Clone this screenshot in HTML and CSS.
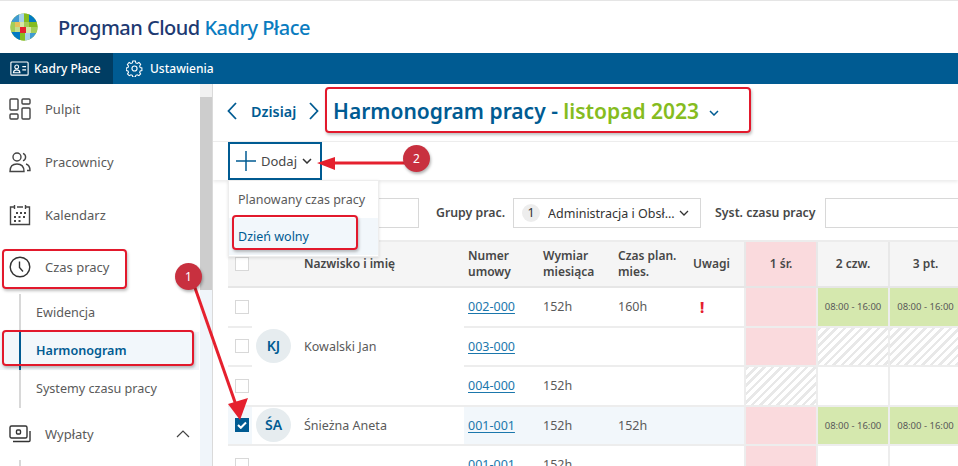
FILE: index.html
```html
<!DOCTYPE html>
<html lang="en">
<head>
    <meta charset="UTF-8">
    <meta name="viewport" content="width=device-width, initial-scale=1.0">
    <title>Harmonogram pracy</title>
    <link rel="stylesheet" href="styles.css">
</head>
<body>
    <header class="top-bar">
        <svg class="logo" viewBox="0 0 28 28" width="28" height="28">
            <defs><clipPath id="logoClip"><circle cx="14" cy="14" r="13.5"/></clipPath></defs>
            <g clip-path="url(#logoClip)">
                <rect width="28" height="28" fill="#85bc20"/>
                <rect x="0" y="0" width="9" height="9" fill="#409bd2"/>
                <rect x="9" y="0" width="5" height="9" fill="#a6d1ea"/>
                <rect x="14" y="0" width="5" height="9" fill="#85bc20"/>
                <rect x="19" y="0" width="9" height="9" fill="#007ac3"/>
                <rect x="0" y="9" width="5" height="10" fill="#a4cd58"/>
                <rect x="5" y="9" width="5" height="5" fill="#e8c15a"/>
                <rect x="10" y="9" width="4" height="5" fill="#d7e8a8"/>
                <rect x="14" y="9" width="5" height="5" fill="#a4cd58"/>
                <rect x="19" y="9" width="9" height="5" fill="#85bc20"/>
                <rect x="5" y="14" width="5" height="5" fill="#c2dd8c"/>
                <rect x="10" y="14" width="6" height="6" fill="#e5202e"/>
                <rect x="16" y="14" width="5" height="6" fill="#d7e8a8"/>
                <rect x="21" y="14" width="7" height="6" fill="#a4cd58"/>
                <rect x="0" y="19" width="10" height="9" fill="#007ac3"/>
                <rect x="10" y="20" width="5" height="8" fill="#85bc20"/>
                <rect x="15" y="20" width="5" height="8" fill="#a6d1ea"/>
                <rect x="20" y="20" width="8" height="8" fill="#409bd2"/>
            </g>
        </svg>
        <span class="brand">Progman Cloud <span class="brand-light">Kadry Płace</span></span>
    </header>

    <nav class="main-nav">
        <a class="nav-tab active">
            <svg viewBox="0 0 20 16" width="19" height="15" fill="none" stroke="#fff" stroke-width="1.2">
                <rect x="0.8" y="1" width="18.4" height="14" rx="1"/>
                <circle cx="7" cy="6.3" r="2"/>
                <path d="M3.5 12.5c.3-2.2 1.6-3 3.5-3s3.2.8 3.5 3z"/>
                <path d="M13 6h4M13 9.5h4"/>
            </svg>
            Kadry Płace
        </a>
        <a class="nav-tab">
            <svg viewBox="0 0 18 18" width="17" height="17" fill="none" stroke="#fff" stroke-width="1.2">
                <path d="M7.5 1h3l.5 2.2 1.6.7 2-1.1 2 2.2-1.2 1.9.6 1.6 2 .5v3l-2 .5-.6 1.6 1.2 1.9-2 2-2-1.1-1.6.7-.5 2h-3l-.5-2-1.6-.7-2 1.1-2-2 1.2-1.9-.6-1.6-2-.5v-3l2-.5.6-1.6L1.3 5l2-2.2 2 1.1L7 3.2z" transform="scale(.92) translate(.3 .1)"/>
                <circle cx="9" cy="9" r="2.7"/>
            </svg>
            Ustawienia
        </a>
    </nav>

    <div class="layout">
        <aside class="sidebar">
            <div class="side-menu">
                <div class="menu-item">
                    <svg viewBox="0 0 22 22" width="22" height="22" fill="none" stroke="#444" stroke-width="1.4">
                        <rect x="1" y="1" width="8" height="11" rx="1"/>
                        <rect x="13" y="1" width="8" height="5" rx="1"/>
                        <rect x="1" y="16" width="8" height="5" rx="1"/>
                        <rect x="13" y="10" width="8" height="11" rx="1"/>
                    </svg>
                    <span>Pulpit</span>
                </div>
                <div class="menu-item">
                    <svg viewBox="0 0 22 22" width="22" height="22" fill="none" stroke="#444" stroke-width="1.4">
                        <circle cx="8" cy="6" r="4"/>
                        <path d="M1 20.5c0-5 2.5-7.5 7-7.5s7 2.5 7 7.5z"/>
                        <path d="M14 2.3a4 4 0 0 1 0 7.5M17 13c2.8.8 4 3.4 4 6.5h-3"/>
                    </svg>
                    <span>Pracownicy</span>
                </div>
                <div class="menu-item">
                    <svg viewBox="0 0 22 22" width="22" height="22" fill="none" stroke="#444" stroke-width="1.4">
                        <path d="M5 3H1.5v17.5h19V3H17M8 3h6M5.5 1v4M16.5 1v4"/>
                        <path d="M7 9h2M11 9h2M15 9h2M5 13h2M9.5 13h2M14 13h2M5 17h2M9.5 17h2" stroke-width="1.8"/>
                    </svg>
                    <span>Kalendarz</span>
                </div>
                <div class="menu-item">
                    <svg viewBox="0 0 22 22" width="22" height="22" fill="none" stroke="#333" stroke-width="1.4">
                        <circle cx="11" cy="11" r="9.8"/>
                        <path d="M10.5 5.5v6l3.5 4"/>
                    </svg>
                    <span>Czas pracy</span>
                </div>
                <div class="sub-menu">
                    <div class="sub-item">Ewidencja</div>
                    <div class="sub-item current">Harmonogram</div>
                    <div class="sub-item">Systemy czasu pracy</div>
                </div>
                <div class="menu-item">
                    <svg viewBox="0 0 22 22" width="22" height="22" fill="none" stroke="#333" stroke-width="1.4">
                        <rect x="1" y="3" width="17" height="12" rx="1.5"/>
                        <rect x="7.5" y="7" width="4" height="4" rx="1"/>
                        <path d="M21 8v9.5a1 1 0 0 1-1 1H4"/>
                    </svg>
                    <span>Wypłaty</span>
                    <svg class="menu-arrow" viewBox="0 0 14 8" width="14" height="8" fill="none" stroke="#444" stroke-width="1.2"><path d="M1 7l6-6 6 6"/></svg>
                </div>
                <div class="sub-menu"><div class="sub-item"></div></div>
            </div>
            <div class="scrollbar"><div class="scroll-up"></div><div class="scroll-thumb"></div></div>
        </aside>

        <main class="content">
            <div class="title-row">
                <svg viewBox="0 0 10 18" width="10" height="18" fill="none" stroke="#005b92" stroke-width="1.8"><path d="M9 1L1.5 9 9 17"/></svg>
                <span class="today">Dzisiaj</span>
                <svg viewBox="0 0 10 18" width="10" height="18" fill="none" stroke="#005b92" stroke-width="1.8"><path d="M1 1l7.5 8L1 17"/></svg>
                <h1 class="page-title">Harmonogram pracy - <span class="month">listopad 2023</span></h1>
                <svg class="title-arrow" viewBox="0 0 10 6" width="10" height="6" fill="none" stroke="#005b92" stroke-width="1.5"><path d="M1 1l4 4 4-4"/></svg>
            </div>

            <div class="toolbar">
                <button class="add-button">
                    <svg viewBox="0 0 20 20" width="20" height="20" stroke="#005b92" stroke-width="1.5"><path d="M10 0v20M0 10h20"/></svg>
                    Dodaj
                    <svg viewBox="0 0 10 6" width="10" height="6" fill="none" stroke="#333" stroke-width="1.5"><path d="M1 1l4 4 4-4"/></svg>
                </button>
            </div>

            <div class="filters">
                <div class="field first-field"></div>
                <label>Grupy prac.</label>
                <div class="field select-field">
                    <span class="count">1</span>
                    <span class="select-text">Administracja i Obsł...</span>
                    <svg viewBox="0 0 10 6" width="10" height="6" fill="none" stroke="#333" stroke-width="1.3"><path d="M1 1l4 4 4-4"/></svg>
                </div>
                <label>Syst. czasu pracy</label>
                <div class="field last-field"></div>
            </div>

            <table class="schedule">
                <colgroup>
                    <col class="c-check"><col class="c-avatar"><col class="c-name"><col class="c-num">
                    <col class="c-dim"><col class="c-plan"><col class="c-note"><col class="c-day"><col class="c-day"><col class="c-day">
                </colgroup>
                <thead>
                    <tr>
                        <th><span class="box"></span></th>
                        <th colspan="2" class="top-name">Nazwisko i imię</th>
                        <th class="num">Numer<br>umowy</th>
                        <th>Wymiar<br>miesiąca</th>
                        <th>Czas plan.<br>mies.</th>
                        <th>Uwagi</th>
                        <th class="mid holiday">1 śr.</th>
                        <th class="mid">2 czw.</th>
                        <th class="mid">3 pt.</th>
                    </tr>
                </thead>
                <tbody>
                    <tr>
                        <td><span class="box"></span></td>
                        <td colspan="2" class="open"></td>
                        <td class="num"><a class="link">002-000</a></td>
                        <td>152h</td>
                        <td>160h</td>
                        <td class="warn">!</td>
                        <td class="holiday"></td>
                        <td class="shift">08:00 - 16:00</td>
                        <td class="shift">08:00 - 16:00</td>
                    </tr>
                    <tr>
                        <td><span class="box"></span></td>
                        <td class="avatar-cell open"><span class="avatar">KJ</span></td>
                        <td class="open">Kowalski Jan</td>
                        <td class="num"><a class="link">003-000</a></td>
                        <td></td>
                        <td></td>
                        <td></td>
                        <td class="holiday"></td>
                        <td class="hatch"></td>
                        <td class="hatch"></td>
                    </tr>
                    <tr>
                        <td><span class="box"></span></td>
                        <td colspan="2"></td>
                        <td class="num"><a class="link">004-000</a></td>
                        <td>152h</td>
                        <td></td>
                        <td></td>
                        <td class="hatch"></td>
                        <td></td>
                        <td></td>
                    </tr>
                    <tr>
                        <td class="tint"><span class="box checked"><svg viewBox="0 0 10 8" width="10" height="8" fill="none" stroke="#fff" stroke-width="2"><path d="M1 4l2.800 2.800L9 1.500"/></svg></span></td>
                        <td class="avatar-cell"><span class="avatar">ŚA</span></td>
                        <td>Śnieżna Aneta</td>
                        <td class="num tint"><a class="link">001-001</a></td>
                        <td class="tint">152h</td>
                        <td class="tint">152h</td>
                        <td class="tint"></td>
                        <td class="holiday"></td>
                        <td class="shift">08:00 - 16:00</td>
                        <td class="shift">08:00 - 16:00</td>
                    </tr>
                    <tr>
                        <td><span class="box"></span></td>
                        <td colspan="2"></td>
                        <td class="num"><a class="link">001-001</a></td>
                        <td>152h</td>
                        <td></td>
                        <td></td>
                        <td class="holiday"></td>
                        <td></td>
                        <td></td>
                    </tr>
                </tbody>
            </table>

            <div class="dropdown">
                <div class="dropdown-item">Planowany czas pracy</div>
                <div class="dropdown-item hovered">Dzień wolny</div>
            </div>
        </main>
    </div>

    <!-- annotations drawn over the screenshot -->
    <div class="mark mark-title"></div>
    <div class="mark mark-czas"></div>
    <div class="mark mark-harm"></div>
    <div class="mark mark-day"></div>
    <svg class="arrows" viewBox="0 0 958 466" width="958" height="466">
        <path d="M194 285L236 405" stroke="#e5202e" stroke-width="3"/>
        <path d="M240 420L228 404 248 398z" fill="#e5202e"/>
        <path d="M423 163H330" stroke="#e5202e" stroke-width="3"/>
        <path d="M317 163L335 157V170z" fill="#e5202e"/>
    </svg>
    <span class="pin pin-one">1</span>
    <span class="pin pin-two">2</span>
</body>
</html>
```

FILE: styles.css
```css
html, body {
    margin: 0;
    height: 466px;
    overflow: hidden;
}
body {
    position: relative;
    font-family: "Noto Sans", Arial, sans-serif;
    font-size: 13px;
    color: #474747;
    background-color: #fff;
}
.top-bar {
    height: 53px;
    display: flex;
    align-items: center;
    box-sizing: border-box;
    padding-left: 10px;
    border-top: 1px solid #e5e5e5;
}
.logo {
    margin-right: 20px;
}
.brand {
    font-size: 20px;
    font-weight: 500;
    color: #1d3a72;
    letter-spacing: -0.5px;
}
.brand-light {
    color: #0a7cc0;
}
.main-nav {
    height: 31px;
    display: flex;
    background-color: #005b92;
}
.nav-tab {
    display: flex;
    align-items: center;
    gap: 5px;
    padding-left: 10px;
    color: #fff;
    font-size: 12px;
    font-weight: 500;
    white-space: nowrap;
}
.nav-tab + .nav-tab {
    padding-left: 13px;
    gap: 7px;
}
.nav-tab.active {
    width: 103px;
    background-color: #003d63;
}
.layout {
    display: flex;
    height: 382px;
}
.sidebar {
    flex: 0 0 212px;
    display: flex;
    border-right: 1px solid #dadada;
}
.side-menu {
    flex: 0 0 199px;
    margin-top: -1px;
}
.menu-item {
    height: 52.67px;
    display: flex;
    align-items: center;
    padding-left: 9px;
    color: #5a5a5a;
    font-size: 13px;
}
.menu-item > span {
    margin-left: 14px;
}
.menu-arrow {
    margin-left: auto;
    margin-right: 9px;
}
.sub-menu {
    margin-left: 19px;
    border-left: 2px solid #d8d8d8;
}
.sub-item {
    height: 38px;
    display: flex;
    align-items: center;
    padding-left: 15px;
    color: #5a5a5a;
    font-size: 12.6px;
}
.sub-item.current {
    margin-left: -21px;
    padding-left: 36px;
    background-color: #f2f7fb;
    color: #005b92;
    font-weight: 600;
    position: relative;
}
.sub-item.current::before {
    content: "";
    position: absolute;
    left: 19px;
    top: 0;
    bottom: 0;
    width: 2px;
    background-color: #005b92;
}
.scrollbar {
    flex: 1;
    margin-left: 1px;
    background-color: #f0f5fa;
}
.scroll-up {
    height: 13px;
    background-color: #f1f1f1;
}
.scroll-thumb {
    height: 193px;
    background-color: #cdcdcd;
}
.content {
    position: relative;
    flex: 1;
    min-width: 0;
    overflow: hidden;
}
.title-row {
    height: 57px;
    box-sizing: border-box;
    display: flex;
    align-items: center;
    padding-left: 14px;
    padding-bottom: 3px;
}
.today {
    margin: 0 14px;
    font-size: 14.4px;
    font-weight: 600;
    color: #005b92;
    width: 44px;
    white-space: nowrap;
}
.page-title {
    margin: 0 0 0 14px;
    font-size: 21px;
    font-weight: 600;
    color: #005b92;
    white-space: nowrap;
}
.month {
    color: #85bc20;
}
.title-arrow {
    margin-left: 10px;
    margin-top: 3px;
}
.toolbar {
    height: 39px;
    box-sizing: border-box;
    padding-left: 15px;
    border-top: 1px solid #ededed;
    box-shadow: 0 2px 3px rgba(0,0,0,0.08);
}
.add-button {
    width: 94px;
    height: 38px;
    display: flex;
    align-items: center;
    gap: 5px;
    padding: 0 0 0 6px;
    background-color: #fff;
    border: 2px solid #005b92;
    font-family: inherit;
    font-size: 13px;
    color: #474747;
}
.filters {
    height: 60px;
    box-sizing: border-box;
    display: flex;
    align-items: flex-start;
    padding: 18px 0 0 140px;
    overflow: hidden;
}
.filters label {
    font-size: 12.3px;
    font-weight: 600;
    line-height: 30px;
    white-space: nowrap;
}
.field {
    box-sizing: border-box;
    height: 30px;
    background-color: #fff;
    border: 1px solid #d8d8d8;
}
.first-field {
    flex: 0 0 66px;
    margin-right: 17px;
}
.select-field {
    flex: 0 0 188px;
    margin: 0 14px 0 8px;
    display: flex;
    align-items: center;
    padding-left: 8px;
    font-size: 12.5px;
    color: #333;
    white-space: nowrap;
}
.count {
    width: 18px;
    height: 18px;
    border-radius: 9px;
    background-color: #ededed;
    text-align: center;
    line-height: 18px;
    margin-right: 8px;
}
.select-text {
    width: 131px;
    overflow: hidden;
}
.last-field {
    flex: 0 0 140px;
    margin-left: 9px;
}
.schedule {
    margin-left: 15px;
    width: 732px;
    table-layout: fixed;
    border-collapse: collapse;
}
.c-check { width: 24px; }
.c-avatar { width: 44px; }
.c-name { width: 168px; }
.c-num { width: 71px; }
.c-dim { width: 75px; }
.c-plan { width: 75px; }
.c-note { width: 60px; }
.c-day { width: 72px; }
.schedule th {
    height: 46px;
    padding: 0 0 0 8px;
    box-sizing: border-box;
    background-color: #f5f5f5;
    border-top: 2px solid #ececec;
    border-bottom: 2px solid #e6e6e6;
    text-align: left;
    font-size: 12px;
    font-weight: 600;
    line-height: 16px;
    color: #474747;
    white-space: nowrap;
}
.schedule th:first-child,
.schedule td:first-child {
    padding-left: 7px;
}
.schedule th.top-name {
    padding-left: 52px;
}
.schedule th.mid {
    text-align: center;
    padding: 0;
    border-left: 2px solid #e8e8e8;
}
.schedule td {
    height: 39.5px;
    padding: 0 0 0 8px;
    box-sizing: border-box;
    border-bottom: 2px solid #ededed;
    font-size: 12.5px;
    color: #5a5a5a;
    white-space: nowrap;
}
.schedule th.num,
.schedule td.num {
    padding-left: 4px;
}
.schedule td:nth-last-child(-n+3) {
    padding: 0;
    border-left: 2px solid #ededed;
}
.schedule td.open {
    border-bottom-color: #fff;
}
.schedule td.avatar-cell {
    padding-left: 4px;
}
.schedule td.tint {
    background-color: #f2f7fb;
}
.schedule th.holiday,
.schedule td.holiday {
    background-color: #fadadd;
}
.schedule td.shift {
    background-color: #d5e8ae;
    text-align: center;
    font-size: 9.5px;
    color: #595959;
}
.schedule td.hatch {
    background: repeating-linear-gradient(135deg, #e8e8e8 0, #e8e8e8 2.5px, #fff 2.5px, #fff 6px);
}
.schedule td.warn {
    color: #e5202e;
    font-weight: 800;
    font-size: 15px;
    padding-left: 15px;
}
.box {
    display: block;
    width: 12px;
    height: 12px;
    background-color: #fff;
    border: 1px solid #d8d8d8;
}
.box.checked {
    display: flex;
    align-items: center;
    justify-content: center;
    background-color: #005b92;
    border-color: #005b92;
}
.avatar {
    display: block;
    width: 35px;
    height: 34px;
    border-radius: 50%;
    background-color: #e6ecef;
    color: #005b92;
    font-size: 14px;
    font-weight: 600;
    line-height: 34px;
    text-align: center;
}
.link {
    color: #1b77ac;
    font-size: 12.5px;
    text-decoration: underline;
    text-underline-offset: 2px;
}
.dropdown {
    position: absolute;
    left: 15px;
    top: 96px;
    width: 149px;
    height: 75px;
    background-color: #fff;
    border: 1px solid #ededed;
    box-shadow: 0 1px 3px rgba(0,0,0,0.12);
}
.dropdown-item {
    height: 37px;
    line-height: 37px;
    padding-left: 9px;
    font-size: 12.5px;
    color: #5a5a5a;
    white-space: nowrap;
}
.dropdown-item.hovered {
    background-color: #f2f7fb;
    color: #005b92;
}
.mark {
    position: absolute;
    box-sizing: border-box;
    border: 2px solid #e2192c;
    border-radius: 4px;
    box-shadow: 1px 2px 3px rgba(0,0,0,0.25);
}
.mark-title { left: 325px; top: 87px; width: 426px; height: 46px; }
.mark-czas { left: 2px; top: 249px; width: 125px; height: 40px; }
.mark-harm { left: 2px; top: 330px; width: 192px; height: 36px; }
.mark-day { left: 232px; top: 215px; width: 126px; height: 35px; }
.arrows {
    position: absolute;
    left: 0;
    top: 0;
}
.pin {
    position: absolute;
    width: 27px;
    height: 27px;
    border-radius: 50%;
    background-color: #c8303f;
    color: #fff;
    font-size: 12px;
    line-height: 27px;
    text-align: center;
    box-shadow: 1px 2px 3px rgba(0,0,0,0.3);
}
.pin-one { left: 175px; top: 263px; }
.pin-two { left: 403px; top: 145px; }
```
